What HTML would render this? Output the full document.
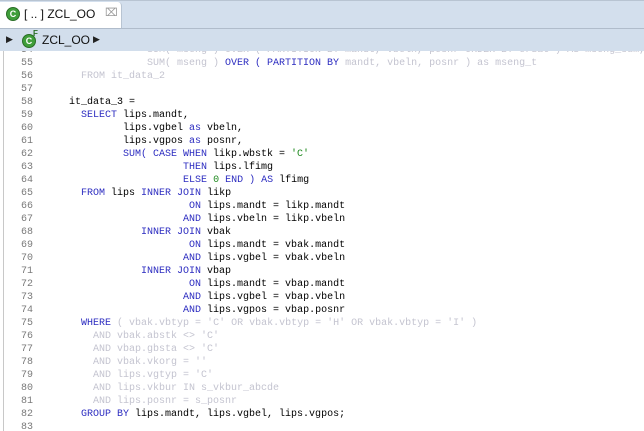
<!DOCTYPE html>
<html><head><meta charset="utf-8"><style>
html,body{margin:0;padding:0;width:644px;height:431px;overflow:hidden;background:#fff;position:relative;font-family:"Liberation Sans",sans-serif}
.tabbar{position:absolute;left:0;top:0;width:644px;height:27px;background:#d3dfed;border-top:1px solid #b8c4d2;border-bottom:1px solid #b0bccb}
.tab{position:absolute;left:0;top:2px;width:121px;height:26px;background:#fff;border-right:1px solid #b8c4d2;border-top-right-radius:4px}
.crumb{position:absolute;left:0;top:29px;width:644px;height:22px;background:#d2deec}
.ico{position:absolute;width:12px;height:12px;border-radius:50%;background:#3f9e3a;border:1px solid #2a6e26;color:#fff;font:bold 9px "Liberation Sans",sans-serif;text-align:center;line-height:12px}
.t{position:absolute;font-size:12px;color:#111;white-space:pre}
.gut{position:absolute;left:3px;top:51px;width:1px;height:380px;background:#c8c8c8}
.row{position:absolute;left:0;height:13px;line-height:13px;font-family:"Liberation Mono",monospace;font-size:10px;white-space:pre;width:644px}
.n{position:absolute;right:611px;color:#7a7a7a;font-size:10px}
.c{position:absolute;left:45px;color:#000}
.k{color:#2c2cc0}
.s{color:#1f8a1f}
.b{color:#c4c4d0}
</style></head><body>
<div class="tabbar"></div>
<div class="tab"></div>
<div class="ico" style="left:6px;top:7px">C</div>
<div class="t" style="left:24px;top:7px">[ .. ] ZCL_OO</div>
<div class="t" style="left:105px;top:6px;color:#999;font-size:11px">⌧</div>
<div class="crumb"></div>
<div class="t" style="left:6px;top:34px;font-size:9px;color:#222">▶</div>
<div class="ico" style="left:22px;top:34px">C</div>
<div class="t" style="left:33px;top:29px;font-size:8px;color:#2a6e26;font-weight:bold">F</div>
<div class="t" style="left:42px;top:33px">ZCL_OO</div>
<div class="t" style="left:93px;top:34px;font-size:9px;color:#222">▶</div>
<div class="gut"></div>
<div style="position:absolute;left:0;top:51px;width:644px;height:380px;overflow:hidden">
<div style="position:absolute;left:0;top:-51px">
<div class="row" style="top:44px"><span class="n">54</span><span class="c b">                 SUM( mseng ) OVER ( PARTITION BY mandt, vbeln, posnr ORDER BY erdat ) AS mseng_sum,</span></div>
<div class="row" style="top:57px"><span class="n">55</span><span class="c"><span class="b">                 SUM( mseng ) </span><span class="k">OVER ( PARTITION BY</span> <span class="b">mandt, vbeln, posnr ) as mseng_t</span></span></div>
<div class="row" style="top:70px"><span class="n">56</span><span class="c b">      FROM it_data_2</span></div>
<div class="row" style="top:83px"><span class="n">57</span></div>
<div class="row" style="top:96px"><span class="n">58</span><span class="c">    it_data_3 =</span></div>
<div class="row" style="top:109px"><span class="n">59</span><span class="c">      <span class="k">SELECT</span> lips.mandt,</span></div>
<div class="row" style="top:122px"><span class="n">60</span><span class="c">             lips.vgbel <span class="k">as</span> vbeln,</span></div>
<div class="row" style="top:135px"><span class="n">61</span><span class="c">             lips.vgpos <span class="k">as</span> posnr,</span></div>
<div class="row" style="top:148px"><span class="n">62</span><span class="c">             <span class="k">SUM( CASE WHEN</span> likp.wbstk = <span class="s">'C'</span></span></div>
<div class="row" style="top:161px"><span class="n">63</span><span class="c">                       <span class="k">THEN</span> lips.lfimg</span></div>
<div class="row" style="top:174px"><span class="n">64</span><span class="c">                       <span class="k">ELSE</span> <span class="s">0</span> <span class="k">END ) AS</span> lfimg</span></div>
<div class="row" style="top:187px"><span class="n">65</span><span class="c">      <span class="k">FROM</span> lips <span class="k">INNER JOIN</span> likp</span></div>
<div class="row" style="top:200px"><span class="n">66</span><span class="c">                        <span class="k">ON</span> lips.mandt = likp.mandt</span></div>
<div class="row" style="top:213px"><span class="n">67</span><span class="c">                       <span class="k">AND</span> lips.vbeln = likp.vbeln</span></div>
<div class="row" style="top:226px"><span class="n">68</span><span class="c">                <span class="k">INNER JOIN</span> vbak</span></div>
<div class="row" style="top:239px"><span class="n">69</span><span class="c">                        <span class="k">ON</span> lips.mandt = vbak.mandt</span></div>
<div class="row" style="top:252px"><span class="n">70</span><span class="c">                       <span class="k">AND</span> lips.vgbel = vbak.vbeln</span></div>
<div class="row" style="top:265px"><span class="n">71</span><span class="c">                <span class="k">INNER JOIN</span> vbap</span></div>
<div class="row" style="top:278px"><span class="n">72</span><span class="c">                        <span class="k">ON</span> lips.mandt = vbap.mandt</span></div>
<div class="row" style="top:291px"><span class="n">73</span><span class="c">                       <span class="k">AND</span> lips.vgbel = vbap.vbeln</span></div>
<div class="row" style="top:304px"><span class="n">74</span><span class="c">                       <span class="k">AND</span> lips.vgpos = vbap.posnr</span></div>
<div class="row" style="top:317px"><span class="n">75</span><span class="c">      <span class="k">WHERE</span> <span class="b">( vbak.vbtyp = 'C' OR vbak.vbtyp = 'H' OR vbak.vbtyp = 'I' )</span></span></div>
<div class="row" style="top:330px"><span class="n">76</span><span class="c b">        AND vbak.abstk &lt;&gt; 'C'</span></div>
<div class="row" style="top:343px"><span class="n">77</span><span class="c b">        AND vbap.gbsta &lt;&gt; 'C'</span></div>
<div class="row" style="top:356px"><span class="n">78</span><span class="c b">        AND vbak.vkorg = ''</span></div>
<div class="row" style="top:369px"><span class="n">79</span><span class="c b">        AND lips.vgtyp = 'C'</span></div>
<div class="row" style="top:382px"><span class="n">80</span><span class="c b">        AND lips.vkbur IN s_vkbur_abcde</span></div>
<div class="row" style="top:395px"><span class="n">81</span><span class="c b">        AND lips.posnr = s_posnr</span></div>
<div class="row" style="top:408px"><span class="n">82</span><span class="c">      <span class="k">GROUP BY</span> lips.mandt, lips.vgbel, lips.vgpos;</span></div>
<div class="row" style="top:421px"><span class="n">83</span></div>
</div></div>
</body></html>
